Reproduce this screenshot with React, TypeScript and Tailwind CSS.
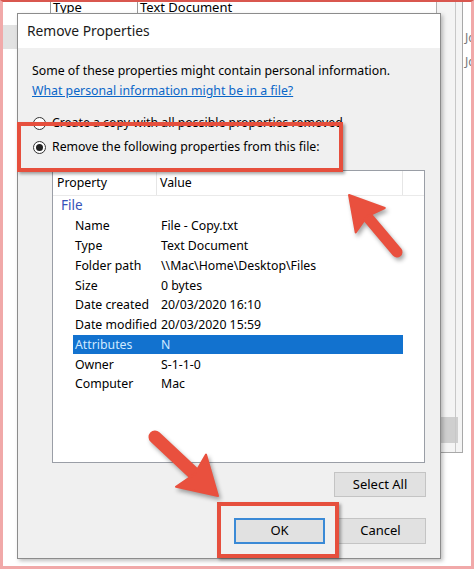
import React from "react";

const rows: [string, string][] = [
  ["Name", "File - Copy.txt"],
  ["Type", "Text Document"],
  ["Folder path", "\\\\Mac\\Home\\Desktop\\Files"],
  ["Size", "0 bytes"],
  ["Date created", "20/03/2020 16:10"],
  ["Date modified", "20/03/2020 15:59"],
  ["Attributes", "N"],
  ["Owner", "S-1-1-0"],
  ["Computer", "Mac"],
];

const Radio = ({ checked }: { checked?: boolean }) => (
  <span className="flex h-[13px] w-[13px] shrink-0 items-center justify-center rounded-full border border-[#333] bg-white">
    {checked && <span className="h-[7px] w-[7px] rounded-full bg-[#222]" />}
  </span>
);

const Button = ({ label, focused, className }: { label: string; focused?: boolean; className?: string }) => (
  <button
    className={
      "flex items-center justify-center bg-[#e1e1e1] text-[13px] text-black " +
      (focused ? "border-2 border-[#3b8ad6] " : "border border-[#c4c4c4] ") +
      (className || "")
    }
  >
    {label}
  </button>
);

const Arrow = ({ x, y, angle, len, head, wing, shaft }: { x: number; y: number; angle: number; len: number; head: number; wing: number; shaft: number }) => (
  <g transform={`translate(${x} ${y}) rotate(${angle})`}>
    <line x1={0} y1={0} x2={len - head + 4} y2={0} stroke="#e9503e" strokeWidth={shaft} strokeLinecap="round" />
    <polygon
      points={`${len - head},${-wing} ${len},0 ${len - head},${wing} ${len - head + 5},0`}
      fill="#e9503e"
      stroke="#e9503e"
      strokeWidth={2}
      strokeLinejoin="round"
    />
  </g>
);

export default function App() {
  return (
    <div className="relative h-[569px] w-[474px] overflow-hidden bg-white font-['Noto_Sans',sans-serif] text-black">
      {/* window behind the dialog */}
      <div className="absolute left-[17px] top-[-20px] h-[473px] w-[446px] border-r border-b border-[#a8a8a8] bg-[#f4f4f4]">
        <div className="flex h-[33px] w-[420px] items-end border-r border-[#b0b0b0] bg-white text-[13px] leading-[16px]">
          <div className="h-full w-[33px]" />
          <div className="h-full w-[87px] border-l border-[#9a9a9a] pl-[2px] pt-[19px]">Type</div>
          <div className="h-full flex-1 border-l border-[#9a9a9a] pl-[2px] pt-[19px]">Text Document</div>
        </div>
        <div className="absolute right-[4px] bottom-[9px] h-[26px] w-[22px] bg-[#cfcfcf]" />
        <div className="absolute right-[6px] top-0 h-full w-px bg-[#c8c8c8]" />
      </div>
      <div className="absolute left-0 top-[25px] h-[24px] w-[17px] bg-[#e2e2e2]" />
      <div className="absolute left-[465px] top-[30px] text-[12px] leading-[16px] text-[#777]">Jc</div>
      <div className="absolute left-[465px] top-[54px] text-[12px] leading-[16px] text-[#777]">Jc</div>

      {/* dialog */}
      <div className="absolute left-[17px] top-[13px] flex h-[546px] w-[424px] flex-col border border-[#8c8c8c] bg-[#f0f0f0] shadow-[2px_2px_4px_rgba(0,0,0,0.25)]">
        <div className="flex h-[34px] shrink-0 items-center bg-white pl-[9px] pt-[1px] text-[13.8px] text-[#1a1a1a]">
          Remove Properties
        </div>
        <div className="flex flex-col px-[14px] text-[12.3px]">
          <p className="mt-[13px] h-[20px] leading-[20px]">Some of these properties might contain personal information.</p>
          <a className="h-[20px] leading-[20px] text-[#0a66c8] underline">What personal information might be in a file?</a>
          <label className="mt-[12px] flex h-[20px] items-center gap-[6px] pl-[1px]">
            <Radio />
            <span>Create a copy with all possible properties removed</span>
          </label>
          <label className="mt-[4px] flex h-[20px] items-center gap-[6px] pl-[1px]">
            <Radio checked />
            <span>Remove the following properties from this file:</span>
          </label>

          <div className="ml-[20px] mt-[13px] flex h-[293px] w-[373px] flex-col border border-[#9a9ea6] bg-white">
            <div className="flex h-[25px] shrink-0 border-b border-[#eaeaea] leading-[24px]">
              <div className="w-[104px] border-r border-[#e6e6e6] pl-[4px]">Property</div>
              <div className="w-[246px] border-r border-[#e6e6e6] pl-[3px]">Value</div>
              <div className="flex-1" />
            </div>
            <div className="h-[20px] pl-[8px] text-[13.5px] leading-[18px] text-[#3552b8]">File</div>
            {rows.map(([label, value]) => {
              const selected = label === "Attributes";
              return (
                <div
                  key={label}
                  className={
                    "ml-[20px] flex h-[19.75px] w-[330px] items-center leading-[19px] " +
                    (selected ? "bg-[#1272cf] text-[#cfe9ff]" : "")
                  }
                >
                  <div className="w-[84px] shrink-0 pl-[2px] whitespace-nowrap">{label}</div>
                  <div className="pl-[4px] whitespace-nowrap">{value}</div>
                </div>
              );
            })}
          </div>

          <div className="mt-[9px] flex justify-end">
            <Button label="Select All" className="h-[25px] w-[92px]" />
          </div>
          <div className="mt-[21px] flex justify-end gap-[10px]">
            <Button label="OK" focused className="h-[26px] w-[91px]" />
            <Button label="Cancel" className="h-[26px] w-[91px]" />
          </div>
        </div>
      </div>

      {/* annotations */}
      <div className="absolute left-[17px] top-[122px] h-[50px] w-[326px] border-[4px] border-[#e64f3d] shadow-[2px_2px_3px_rgba(0,0,0,0.35)]" />
      <div className="absolute left-[217px] top-[502px] h-[56px] w-[122px] border-[4px] border-[#e64f3d] shadow-[2px_2px_3px_rgba(0,0,0,0.35)]" />
      <svg
        className="pointer-events-none absolute inset-0 drop-shadow-[2px_3px_2px_rgba(0,0,0,0.35)]"
        width={474}
        height={569}
        viewBox="0 0 474 569"
      >
        <Arrow x={397} y={252} angle={229.9} len={74.5} head={33} wing={19} shaft={11} />
        <Arrow x={155} y={437} angle={43.1} len={86.3} head={37} wing={22} shaft={13} />
      </svg>

      {/* photo frame */}
      <div className="pointer-events-none absolute inset-0 border-[3px] border-[#f1a9a9] border-t-[2px] border-t-[#d9574f]" />
    </div>
  );
}
